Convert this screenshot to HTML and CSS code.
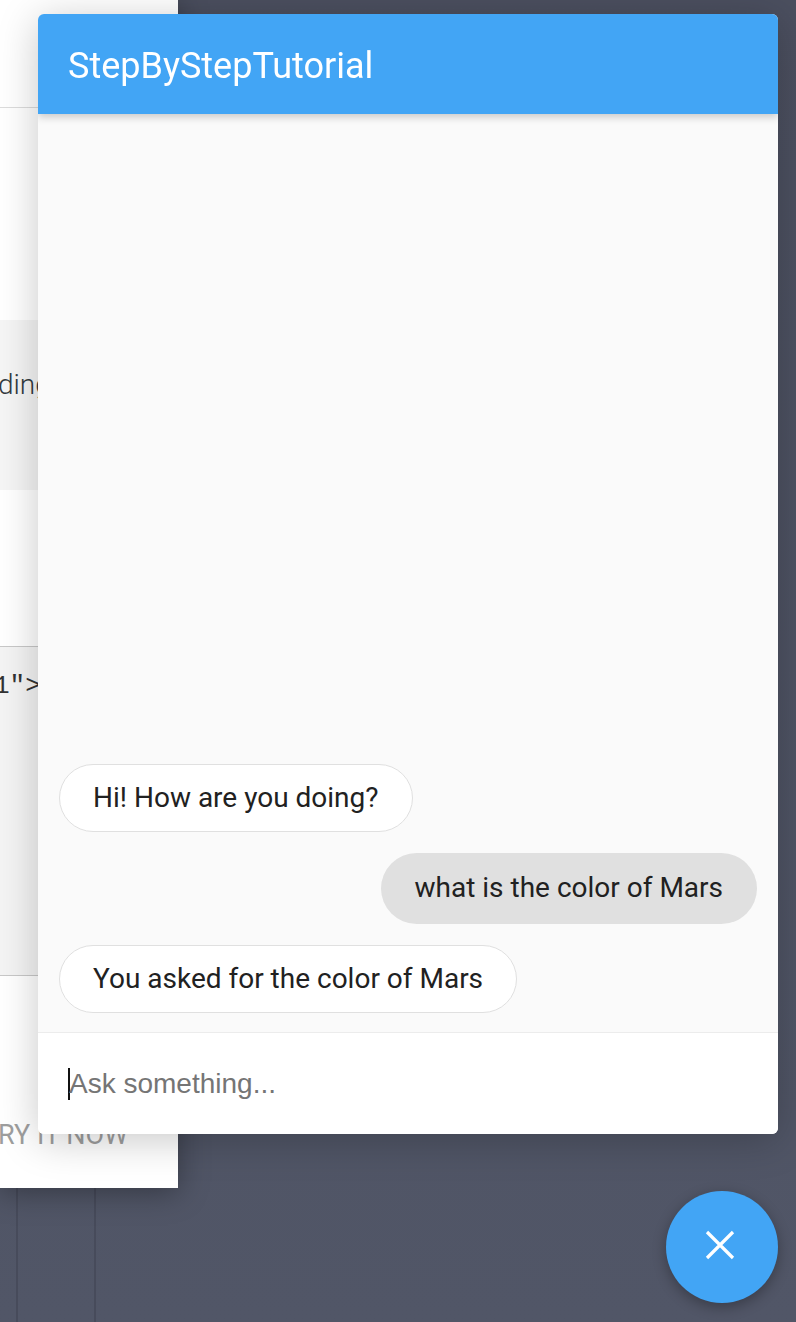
FILE: index.html
```html
<!DOCTYPE html>
<html lang="en">
<head>
<meta charset="utf-8">
<title>StepByStepTutorial</title>
<link rel="stylesheet" href="styles.css">
</head>
<body>
  <main class="page">
    <article class="card">
      <div class="card-top"></div>
      <div class="card-gap"></div>
      <section class="card-lead"><p class="lead">ding a chatbot</p></section>
      <div class="card-gap2"></div>
      <section class="card-code"><pre class="code">1"&gt;</pre></section>
      <div class="card-actions"><span class="try">TRY IT NOW</span></div>
    </article>
  </main>

  <aside class="chat">
    <header class="chat-header">StepByStepTutorial</header>
    <div class="chat-body">
      <div class="msg bot">Hi! How are you doing?</div>
      <div class="msg user">what is the color of Mars</div>
      <div class="msg bot">You asked for the color of Mars</div>
    </div>
    <div class="chat-input"><span class="caret"></span><span class="placeholder">Ask something...</span></div>
  </aside>

  <button class="fab" aria-label="Close">
    <svg width="30" height="30" viewBox="0 0 30 30"><path d="M2 2 L28 28 M28 2 L2 28" stroke="#fff" stroke-width="3.2" fill="none"/></svg>
  </button>
</body>
</html>
```
FILE: styles.css
```css
html, body {
  margin: 0;
  padding: 0;
  height: 100%;
}
body {
  overflow: hidden;
  background-color: #4f5465;
  background-image:
    linear-gradient(to right, transparent 16px, #474b5b 16px, #474b5b 18px, transparent 18px, transparent 94px, #474b5b 94px, #474b5b 96px, transparent 96px),
    linear-gradient(#4b4f5f, #515667);
  font-family: Roboto, "Liberation Sans", sans-serif;
}
.page {
  display: flex;
}
.card {
  width: 178px;
  height: 1188px;
  background: #fff;
  box-shadow: 0 4px 28px rgba(0, 0, 0, 0.35);
  display: flex;
  flex-direction: column;
  overflow: hidden;
}
.card-top {
  height: 107px;
  border-bottom: 1px solid #dcdcdc;
  flex: none;
}
.card-gap { height: 212px; flex: none; }
.card-lead {
  height: 170px;
  background: #f5f5f5;
  flex: none;
  display: flex;
  align-items: center;
}
.lead {
  margin: 0 0 0 -2px;
  white-space: nowrap;
  font-weight: 300;
  font-size: 28px;
  color: #333a40;
  position: relative;
  top: -21px;
}
.card-gap2 { height: 156px; flex: none; }
.card-code {
  height: 328px;
  flex: none;
  background: #f4f4f4;
  border-top: 1px solid #c8c8c8;
  border-bottom: 1px solid #c8c8c8;
}
.code {
  margin: 24px 0 0 -6px;
  font-family: "Liberation Mono", monospace;
  font-size: 26px;
  color: #333;
}
.card-actions {
  flex: 1;
  display: flex;
  align-items: flex-end;
  padding-bottom: 37px;
}
.try {
  margin-left: -18px;
  font-size: 27px;
  color: #9e9e9e;
  white-space: nowrap;
}

.chat {
  position: fixed;
  left: 38px;
  top: 14px;
  width: 740px;
  height: 1120px;
  border-radius: 6px;
  overflow: hidden;
  background: #fafafa;
  box-shadow: 0 6px 40px rgba(0, 0, 0, 0.22);
  display: flex;
  flex-direction: column;
}
.chat-header {
  flex: none;
  height: 100px;
  background: #42a5f5;
  color: #fff;
  font-size: 36px;
  display: flex;
  align-items: center;
  padding-left: 30px;
  padding-top: 4px;
  box-sizing: border-box;
  box-shadow: 0 3px 8px rgba(0, 0, 0, 0.2);
  position: relative;
  z-index: 1;
}
.chat-body {
  flex: 1;
  display: flex;
  flex-direction: column;
  justify-content: flex-end;
  align-items: flex-start;
  padding: 0 21px 19px;
  gap: 21px;
}
.msg {
  font-size: 28px;
  line-height: 30px;
  color: #212121;
  padding: 18px 33px;
  border-radius: 36px;
  white-space: nowrap;
}
.msg.bot {
  background: #fff;
  border: 1px solid #e0e0e0;
}
.msg.user {
  align-self: flex-end;
  background: #e0e0e0;
  padding: 20px 34px 21px;
}
.chat-input {
  flex: none;
  height: 101px;
  background: #fff;
  border-top: 1px solid #ececec;
  display: flex;
  align-items: center;
  padding-left: 30px;
  font-family: "Liberation Sans", Arial, sans-serif;
  font-size: 28px;
  color: #757575;
}
.caret {
  width: 2px;
  height: 32px;
  background: #111;
  margin-right: -1px;
}
.fab {
  position: fixed;
  right: 18px;
  bottom: 19px;
  width: 112px;
  height: 112px;
  border-radius: 50%;
  border: none;
  background: #42a5f5;
  box-shadow: 0 4px 14px rgba(0, 0, 0, 0.3);
  display: flex;
  align-items: center;
  justify-content: center;
  padding: 0;
}
.fab svg { display: block; margin: -4px 4px 0 0; }
```
